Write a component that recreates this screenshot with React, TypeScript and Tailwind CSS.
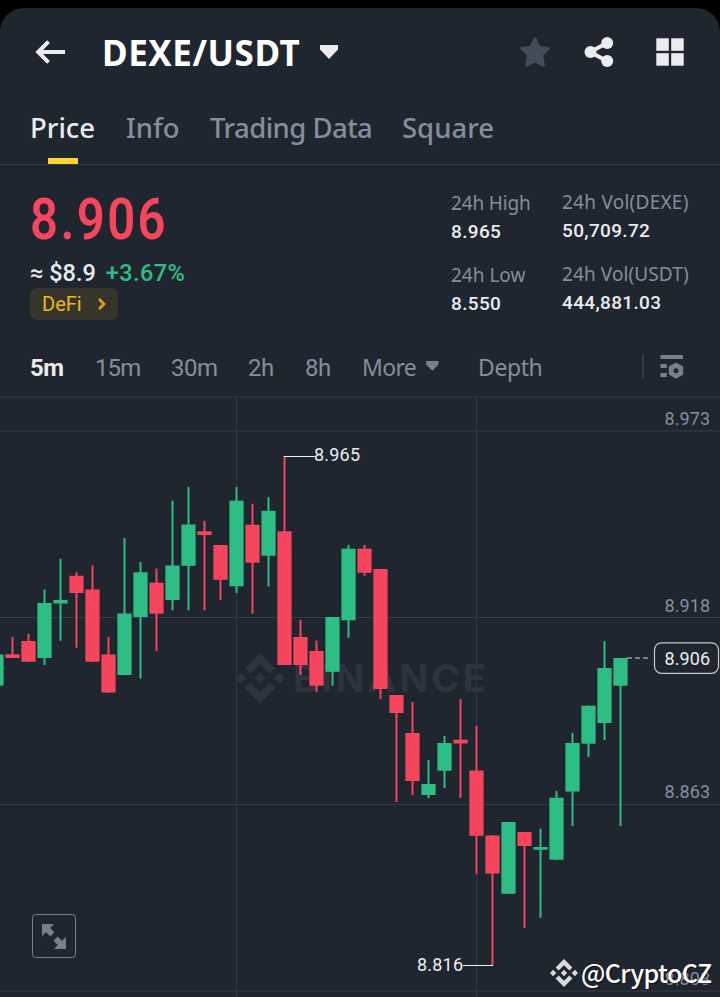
import React from 'react';

interface Candle {
  up: boolean;
  high: number;
  top: number;
  bottom: number;
  low: number;
}

const c = (side: 'up' | 'down', high: number, top: number, bottom: number, low: number): Candle => ({
  up: side === 'up',
  high,
  top,
  bottom,
  low,
});

const candles: Candle[] = [
  c('up', 654.5, 654.5, 685.5, 685.5),
  c('down', 637, 654.3, 658, 658),
  c('down', 633.7, 641, 661.7, 661.7),
  c('up', 589.5, 603, 658, 665),
  c('up', 558.8, 600, 603.5, 640.8),
  c('down', 572.3, 575.8, 593, 647.8),
  c('down', 565.5, 589.5, 661.7, 661.7),
  c('down', 637, 654.5, 692.5, 692.5),
  c('up', 538, 613.5, 675, 675),
  c('up', 562, 572.3, 617, 678.7),
  c('down', 568.7, 582.7, 613.7, 651),
  c('up', 500.7, 565.5, 600, 610.3),
  c('up', 487, 524.5, 565.8, 610.3),
  c('down', 520.8, 531.3, 535, 610.3),
  c('down', 545, 545, 579.8, 600),
  c('up', 487, 500.7, 586.3, 593),
  c('down', 503.8, 524.7, 562.7, 613.7),
  c('up', 497, 510.8, 555.7, 586.5),
  c('down', 456, 531.3, 665, 665),
  c('down', 620, 637, 665, 675),
  c('down', 640.7, 651, 685.7, 692),
  c('up', 617, 617, 671.8, 685.7),
  c('up', 545, 548.7, 620.3, 637.7),
  c('down', 545, 548.7, 572.8, 575.8),
  c('down', 569, 569, 689, 699),
  c('down', 695, 695, 713, 802),
  c('down', 702, 733, 781, 795),
  c('up', 760, 784, 795, 798),
  c('up', 736, 743, 770.8, 788),
  c('down', 699, 739.7, 743.5, 798),
  c('down', 726, 770.5, 835.8, 873.7),
  c('down', 835.5, 835.5, 873.5, 965.7),
  c('up', 822, 822, 893.8, 893.8),
  c('down', 832, 832, 846, 928),
  c('up', 828.7, 847, 849.7, 917.7),
  c('up', 791, 797.7, 859.7, 859.7),
  c('up', 733, 743, 791.5, 826),
  c('up', 705.7, 705.7, 743.7, 757),
  c('up', 641, 668, 723, 740),
  c('up', 658, 658, 685.7, 826),
];

const axisLabels = [
  { y: 425, value: '8.973' },
  { y: 612, value: '8.918' },
  { y: 798, value: '8.863' },
  { y: 984.5, value: '8.808' },
];

const intervals = [
  { label: '5m', className: 'w-[65px] text-[#eaecef] font-bold tracking-[-0.6px]' },
  { label: '15m', className: 'w-[76px] tracking-[-0.9px]' },
  { label: '30m', className: 'w-[77px] tracking-[-0.5px]' },
  { label: '2h', className: 'w-[57px] tracking-[-0.5px]' },
  { label: '8h', className: 'w-[57px] tracking-[-0.5px]' },
];

// Diamond mark, drawn in a 50x50 box
function DiamondPaths() {
  return (
    <>
      <path d="M25 0 L40 15.2 L34.6 20.7 L25 11.1 L15.4 20.7 L10 15.2Z" />
      <path d="M25 50 L40 34.8 L34.6 29.3 L25 38.9 L15.4 29.3 L10 34.8Z" />
      <path d="M25 19.4 L30.6 25 L25 30.6 L19.4 25Z" />
      <path d="M5.6 19.4 L11.2 25 L5.6 30.6 L0 25Z" />
      <path d="M44.4 19.4 L50 25 L44.4 30.6 L38.8 25Z" />
    </>
  );
}

function Header() {
  return (
    <header className="flex h-[88px] items-center pl-[34px] pr-[36px]">
      <svg width="32" height="26" viewBox="0 0 32 26" fill="none" stroke="#eaecef" strokeWidth="4">
        <path d="M31 13H4" />
        <path d="M14.5 2.7L4.2 13l10.3 10.3" />
      </svg>
      <h1 className="ml-[36px] mt-[2px] w-[218px] whitespace-nowrap font-['Noto_Sans'] text-[35px] font-bold leading-[44px] tracking-[0.55px] text-white">
        DEXE/USDT
      </h1>
      <svg width="18" height="14" viewBox="0 0 18 14" fill="#eaecef">
        <path d="M0 0H18V4.5L9 14L0 4.5Z" />
      </svg>
      <div className="ml-auto flex items-center">
        <svg width="32" height="32" viewBox="0 0 32 32" fill="#434c5a" stroke="#434c5a" strokeWidth="3" strokeLinejoin="round">
          <path d="M16 2.8L19.8 11.2L29.3 12.5L22.7 18.9L24.2 29.2L16 24.8L7.8 29.2L9.3 18.9L2.7 12.5L12.2 11.2Z" />
        </svg>
        <svg className="ml-[33px]" width="30" height="30" viewBox="0 0 30 30" fill="#eaecef">
          <path d="M23 6L6 15L23 24" fill="none" stroke="#eaecef" strokeWidth="4" />
          <circle cx="6.5" cy="15" r="6" />
          <circle cx="23.2" cy="6" r="6" />
          <circle cx="23.2" cy="24" r="6" />
        </svg>
        <svg className="ml-[42px]" width="28" height="28" viewBox="0 0 28 28" fill="#eaecef">
          <rect width="12.5" height="12.5" x="0.3" y="0.3" />
          <rect width="12.5" height="12.5" x="15.2" y="0.3" />
          <rect width="12.5" height="12.5" x="0.3" y="15.2" />
          <rect width="12.5" height="12.5" x="15.2" y="15.2" />
        </svg>
      </div>
    </header>
  );
}

function Tabs() {
  return (
    <nav className="flex h-[69px] border-b border-[#333b47] pl-[30px] font-['Noto_Sans'] text-[27.5px] font-medium leading-[64px] text-[#848e9c] whitespace-nowrap">
      <div className="relative w-[96px] text-[#eaecef]">
        Price
        <span className="absolute bottom-0 left-[18px] h-[6px] w-[30px] bg-[#fcd535]" />
      </div>
      <div className="w-[84px]">Info</div>
      <div className="w-[192px] tracking-[-0.55px]">Trading Data</div>
      <div>Square</div>
    </nav>
  );
}

interface StatProps {
  label: string;
  value: string;
  labelClass?: string;
}

function Stat({ label, value, labelClass = '' }: StatProps) {
  return (
    <div className="h-[72px] whitespace-nowrap">
      <div className={`font-['Noto_Sans'] text-[19px] leading-[28px] text-[#848e9c] ${labelClass}`}>{label}</div>
      <div className="pt-px font-[Roboto] text-[19px] font-medium leading-[28px] tracking-[0.35px] text-[#eaecef]">{value}</div>
    </div>
  );
}

function Summary() {
  return (
    <section className="flex h-[175px] pl-[30px]">
      <div className="w-[421px] pt-[22px] font-[Roboto]">
        <div className="h-[64px] origin-left scale-x-[0.86] pt-px text-[57px] font-semibold leading-[64px] tracking-[2.8px] text-[#f6465d]">8.906</div>
        <div className="flex h-[37px] items-center gap-[10px] whitespace-nowrap pt-[6px] text-[23.5px] font-medium leading-[30px]">
          <span className="text-[#eaecef]">≈ $8.9</span>
          <span className="tracking-[0.4px] text-[#2ebd85]">+3.67%</span>
        </div>
        <div className="flex h-8 w-[88px] items-center justify-between rounded-[7px] bg-[#37342b] pl-3 pr-[12px] text-[20px] text-[#f0b90b]">
          DeFi
          <svg width="8" height="12" viewBox="0 0 8 12" fill="none" stroke="#dfa510" strokeWidth="2.6">
            <path d="M1 1L6 6L1 11" />
          </svg>
        </div>
      </div>
      <div className="w-[111px] pt-[24px]">
        <Stat label="24h High" value="8.965" labelClass="tracking-[-0.15px]" />
        <Stat label="24h Low" value="8.550" />
      </div>
      <div className="pt-[23px]">
        <Stat label="24h Vol(DEXE)" value="50,709.72" labelClass="tracking-[0.25px]" />
        <Stat label="24h Vol(USDT)" value="444,881.03" labelClass="tracking-[0.1px]" />
      </div>
    </section>
  );
}

function IntervalBar() {
  return (
    <div className="flex h-[58px] items-center whitespace-nowrap border-b-2 border-[#2a303b] pl-[30px] font-[Roboto] text-[24px] text-[#848e9c]">
      {intervals.map((item) => (
        <div key={item.label} className={item.className}>
          {item.label}
        </div>
      ))}
      <div className="mb-[2px] w-[64px] font-['Noto_Sans'] text-[23px] tracking-[-0.7px]">More</div>
      <svg className="mb-[4px]" width="13" height="10" viewBox="0 0 13 10" fill="#76808f">
        <path d="M0 0H12.5V3.5L6.3 9.8L0 3.5Z" />
      </svg>
      <div className="mb-[2px] ml-[39px] w-[164px] font-['Noto_Sans'] text-[23px] tracking-[-0.4px]">Depth</div>
      <div className="mb-1 h-6 w-[2px] bg-[#333b47]" />
      <svg className="mb-[2px] ml-[16px]" width="24" height="24" viewBox="0 0 24 24" fill="#76808f">
        <path d="M0.5 0H23V4H0.5ZM0.5 9H6.8V13H0.5ZM0.5 18H6.8V22H0.5Z" />
        <path fillRule="evenodd" d="M16 7.5L23.2 11.6V19.6L16 23.8L8.8 19.6V11.6ZM16 13.2A2.5 2.5 0 1 0 16 18.2A2.5 2.5 0 1 0 16 13.2Z" />
      </svg>
    </div>
  );
}

function Chart() {
  return (
    <div className="relative h-[599px]">
      <svg className="block" width="720" height="599" viewBox="0 398 720 599">
        <g fill="#2b313c">
          <rect x="0" y="430" width="720" height="2" />
          <rect x="0" y="617" width="720" height="1" fill="#333944" />
          <rect x="0" y="804" width="720" height="1" fill="#333944" />
          <rect x="0" y="990" width="720" height="2" />
          <rect x="236" y="398" width="1" height="599" fill="#333944" />
          <rect x="476" y="398" width="1" height="599" fill="#333944" />
        </g>

        {/* Watermark */}
        <g fill="#2e333d">
          <g transform="translate(235 653)">
            <DiamondPaths />
          </g>
          <text x="293" y="692" fontFamily="Inter" fontWeight="700" fontSize="38" textLength="193">
            BINANCE
          </text>
        </g>

        {candles.map((candle, i) => {
          const x = 16 * i - 3.5;
          return (
            <g key={i} fill={candle.up ? '#2ebd85' : '#f6465d'}>
              <rect x={x - 1} y={candle.high} width="2" height={candle.low - candle.high} />
              <rect x={x - 7.1} y={candle.top} width="14.2" height={candle.bottom - candle.top} />
            </g>
          );
        })}

        {/* High and low markers */}
        <g fill="#eaecef" fontFamily="Roboto" fontSize="18">
          <rect x="284" y="456" width="31" height="1" />
          <text x="314" y="461" textLength="46">8.965</text>
          <rect x="463" y="965" width="30" height="1" />
          <text x="417" y="971" textLength="46">8.816</text>
        </g>

        <g fill="#848e9c" fontFamily="Roboto" fontSize="18">
          {axisLabels.map((label) => (
            <text key={label.value} x="664.5" y={label.y} textLength="45.5">
              {label.value}
            </text>
          ))}
        </g>

        {/* Current price */}
        <path d="M627 658H649" stroke="#9a9ea5" strokeWidth="1.5" strokeDasharray="5 3" />
        <rect x="654.5" y="642.8" width="64" height="30.5" rx="7" fill="#202630" stroke="#c4c7cc" strokeWidth="1.2" />
        <text x="664.5" y="665" fill="#eaecef" fontFamily="Roboto" fontSize="18" textLength="45.5">8.906</text>
      </svg>

      <button className="absolute left-8 top-[516px] flex size-11 items-center justify-center rounded-[4px] border border-[#76808f]">
        <svg width="24" height="25" viewBox="0 0 24 25" fill="#76808f">
          <path d="M0 0H12L8.2 4L12.4 8.3L8.4 12.5L4 8.2L0 12.2Z" />
          <path d="M24 25H12L15.8 21L11.6 16.7L15.6 12.5L20 16.8L24 12.8Z" />
        </svg>
      </button>

      <div className="absolute left-[550px] top-[558px] flex items-center">
        <svg className="mt-[2px]" width="28" height="28" viewBox="0 0 50 50" fill="#d9dadc">
          <DiamondPaths />
        </svg>
        <span className="ml-[3px] whitespace-nowrap font-['Noto_Sans_CJK_SC',sans-serif] text-[25px] font-medium leading-[32px] tracking-[-0.6px] text-white [text-shadow:1px_1px_1px_#0008]">
          @CryptoCZ
        </span>
      </div>
    </div>
  );
}

export default function App() {
  return (
    <div className="h-[997px] w-[720px] overflow-hidden bg-black pt-2">
      <main className="rounded-t-[24px] bg-[#202630]">
        <Header />
        <Tabs />
        <Summary />
        <IntervalBar />
        <Chart />
      </main>
    </div>
  );
}
